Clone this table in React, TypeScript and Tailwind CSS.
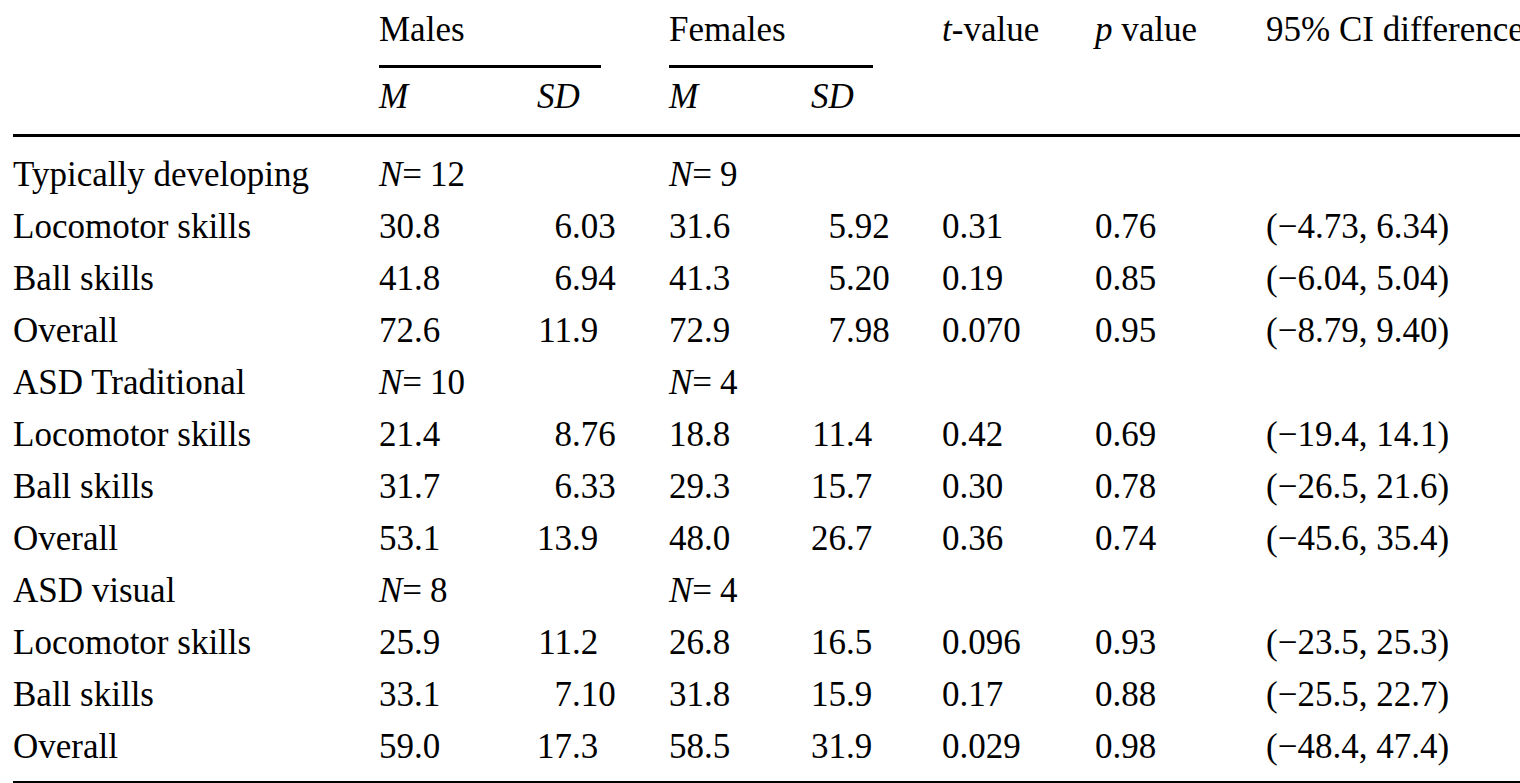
import React from "react";

type Row = {
  label: string;
  group?: boolean;
  nMale?: string;
  nFemale?: string;
  mM?: string;
  mSD?: string;
  fM?: string;
  fSD?: string;
  t?: string;
  p?: string;
  ci?: string;
};

const rows: Row[] = [
  { label: "Typically developing", group: true, nMale: "12", nFemale: "9" },
  { label: "Locomotor skills", mM: "30.8", mSD: "6.03", fM: "31.6", fSD: "5.92", t: "0.31", p: "0.76", ci: "(\u22124.73, 6.34)" },
  { label: "Ball skills", mM: "41.8", mSD: "6.94", fM: "41.3", fSD: "5.20", t: "0.19", p: "0.85", ci: "(\u22126.04, 5.04)" },
  { label: "Overall", mM: "72.6", mSD: "11.9", fM: "72.9", fSD: "7.98", t: "0.070", p: "0.95", ci: "(\u22128.79, 9.40)" },
  { label: "ASD Traditional", group: true, nMale: "10", nFemale: "4" },
  { label: "Locomotor skills", mM: "21.4", mSD: "8.76", fM: "18.8", fSD: "11.4", t: "0.42", p: "0.69", ci: "(\u221219.4, 14.1)" },
  { label: "Ball skills", mM: "31.7", mSD: "6.33", fM: "29.3", fSD: "15.7", t: "0.30", p: "0.78", ci: "(\u221226.5, 21.6)" },
  { label: "Overall", mM: "53.1", mSD: "13.9", fM: "48.0", fSD: "26.7", t: "0.36", p: "0.74", ci: "(\u221245.6, 35.4)" },
  { label: "ASD visual", group: true, nMale: "8", nFemale: "4" },
  { label: "Locomotor skills", mM: "25.9", mSD: "11.2", fM: "26.8", fSD: "16.5", t: "0.096", p: "0.93", ci: "(\u221223.5, 25.3)" },
  { label: "Ball skills", mM: "33.1", mSD: "7.10", fM: "31.8", fSD: "15.9", t: "0.17", p: "0.88", ci: "(\u221225.5, 22.7)" },
  { label: "Overall", mM: "59.0", mSD: "17.3", fM: "58.5", fSD: "31.9", t: "0.029", p: "0.98", ci: "(\u221248.4, 47.4)" },
];

const cols = "grid grid-cols-[366px_158px_132px_142px_131px_153px_171px_1fr]";

// integer part right-aligned in a two-digit box so the points line up
function Dec({ v }: { v?: string }) {
  if (!v) return <span />;
  const [a, b] = v.split(".");
  return (
    <span className="whitespace-nowrap">
      <span className="inline-block w-[35px] text-right">{a}</span>.{b}
    </span>
  );
}

function N({ n }: { n?: string }) {
  return (
    <span className="whitespace-nowrap">
      <i>N</i>=<span className="inline-block w-[8px]" />
      {n}
    </span>
  );
}

export default function App() {
  return (
    <div
      className="bg-white text-black h-[783px] w-[1520px] overflow-hidden pl-[13px] text-[35px] leading-[52px]"
      style={{ fontFamily: '"Liberation Serif", "Times New Roman", serif' }}
    >
      <div className={`${cols} mt-[4px] whitespace-nowrap`}>
        <div />
        <div className="col-span-2">Males</div>
        <div className="col-span-2">Females</div>
        <div>
          <i>t</i>-value
        </div>
        <div>
          <i>p</i> value
        </div>
        <div>95% CI difference</div>
      </div>

      <div className={`${cols} mt-[9px]`}>
        <div />
        <div className="col-span-2 h-[3px] bg-black mr-[68px]" />
        <div className="col-span-2 h-[3px] bg-black mr-[69px]" />
      </div>

      <div className={`${cols} mt-[3px] italic`}>
        <div />
        <div>M</div>
        <div>SD</div>
        <div>M</div>
        <div>SD</div>
      </div>

      <div className="h-[3px] bg-black mt-[11px]" />

      <div className="mt-[12px]">
        {rows.map((r, i) => (
          <div key={i} className={`${cols} h-[52px] whitespace-nowrap`}>
            <div>{r.label}</div>
            {r.group ? (
              <>
                <div>
                  <N n={r.nMale} />
                </div>
                <div />
                <div>
                  <N n={r.nFemale} />
                </div>
                <div />
              </>
            ) : (
              <>
                <div>{r.mM}</div>
                <div>
                  <Dec v={r.mSD} />
                </div>
                <div>{r.fM}</div>
                <div>
                  <Dec v={r.fSD} />
                </div>
                <div>{r.t}</div>
                <div>{r.p}</div>
                <div>{r.ci}</div>
              </>
            )}
          </div>
        ))}
      </div>

      <div className="h-[3px] bg-black mt-[8px]" />
    </div>
  );
}
